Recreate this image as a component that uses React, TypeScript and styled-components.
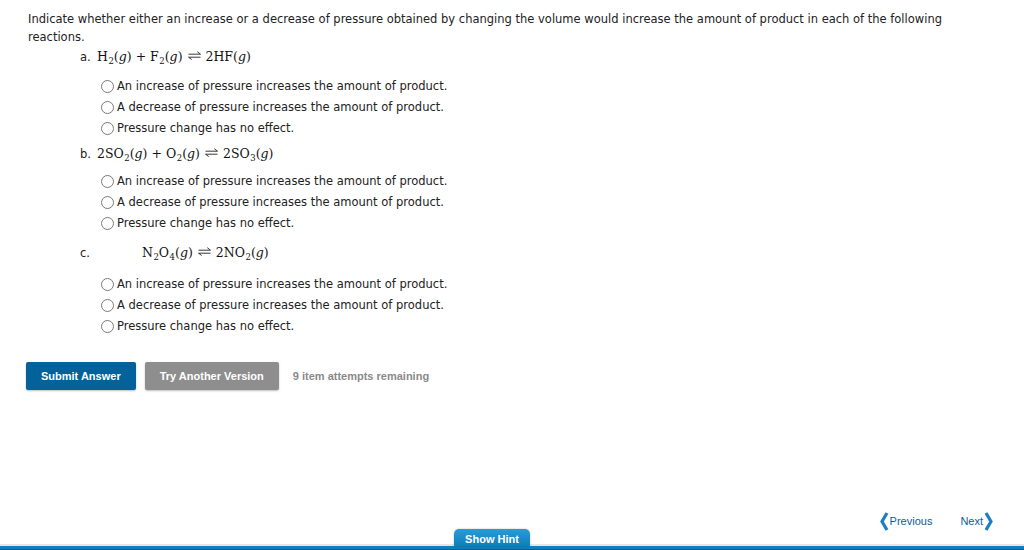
import React from "react";
import styled, { createGlobalStyle } from "styled-components";

const GlobalStyle = createGlobalStyle`
    html, body {
        margin: 0;
        padding: 0;
        background: #fff;
    }
    body {
        font-family: "DejaVu Sans", Verdana, sans-serif;
        color: #222;
    }
`;

const Page = styled.div`
    height: 550px;
    display: flex;
    flex-direction: column;
    overflow: hidden;
`;

const Content = styled.div`
    padding: 10px 70px 0 28px;
    flex: 1;
`;

const Prompt = styled.p`
    margin: 0;
    font-size: 11.5px;
    line-height: 18px;
`;

const Part = styled.div<{ $top: number }>`
    margin-top: ${(p) => p.$top}px;
    padding-left: 52px;
`;

const PartHead = styled.div`
    display: flex;
    align-items: baseline;
    font-size: 11.5px;
    height: 20px;
`;

const Letter = styled.span<{ $width: number }>`
    width: ${(p) => p.$width}px;
    flex-shrink: 0;
`;

const Equation = styled.span`
    font-family: "DejaVu Serif", "Liberation Serif", serif;
    font-size: 12.5px;
    color: #111;
    white-space: nowrap;
    sub {
        font-size: 8.5px;
        position: relative;
        top: 3px;
        vertical-align: baseline;
        line-height: 0;
        margin-left: 0.5px;
    }
    i {
        font-style: italic;
    }
`;

const Plus = styled.span`
    margin: 0 4px;
`;

const ArrowBox = styled.span`
    display: inline-block;
    margin: 0 5px;
    vertical-align: 1px;
    line-height: 0;
`;

const Options = styled.div<{ $top: number }>`
    margin-top: ${(p) => p.$top}px;
    padding-left: 21px;
    display: flex;
    flex-direction: column;
    gap: 7px;
`;

const Option = styled.label`
    display: flex;
    align-items: center;
    font-size: 11.5px;
    line-height: 14px;
    cursor: pointer;
`;

const Radio = styled.span`
    width: 11px;
    height: 11px;
    border: 1px solid #7a7a7a;
    border-radius: 50%;
    background: #fff;
    margin-right: 3px;
    flex-shrink: 0;
`;

const Actions = styled.div`
    display: flex;
    align-items: center;
    margin-top: 29px;
    margin-left: -2px;
    gap: 9px;
`;

const Button = styled.button<{ $variant: "primary" | "muted" }>`
    height: 28px;
    padding: 0 15px;
    border: none;
    border-radius: 2px;
    font-family: "Liberation Sans", Arial, sans-serif;
    font-weight: bold;
    font-size: 11px;
    color: #fff;
    background: ${(p) => (p.$variant === "primary" ? "#03629a" : "#8e8e8e")};
    box-shadow: 0 1px 2px rgba(0, 0, 0, 0.25);
    cursor: pointer;
`;

const Attempts = styled.span`
    margin-left: 5px;
    font-family: "Liberation Sans", Arial, sans-serif;
    font-weight: bold;
    font-size: 11px;
    color: #8a8a8a;
`;

const Footer = styled.div`
    display: flex;
    flex-direction: column;
`;

const NavRow = styled.div`
    display: flex;
    justify-content: flex-end;
    align-items: center;
    gap: 28px;
    padding-right: 30px;
    height: 18px;
`;

const NavLink = styled.a`
    display: flex;
    align-items: center;
    gap: 1px;
    font-family: "Liberation Sans", Arial, sans-serif;
    font-size: 11px;
    color: #0a5d9c;
    text-decoration: none;
    cursor: pointer;
`;

const HintRow = styled.div`
    display: flex;
    padding-left: 454px;
    margin-top: -1px;
    position: relative;
    z-index: 1;
`;

const HintTab = styled.button`
    width: 76px;
    height: 17px;
    border: none;
    border-radius: 5px 5px 0 0;
    background: linear-gradient(#2a9bd3, #0f7fbd);
    color: #fff;
    font-family: "Liberation Sans", Arial, sans-serif;
    font-weight: bold;
    font-size: 11px;
    padding: 2px 0 0;
    box-shadow: 0 0 2px rgba(0, 0, 0, 0.3);
    cursor: pointer;
`;

const BottomBar = styled.div`
    margin-top: -2px;
    height: 3px;
    border-top: 2px solid #e6e6e6;
    background: #0f7fbd;
    border-bottom: 1px solid #0b5b8a;
`;

function Chevron({ dir }: { dir: "left" | "right" }): JSX.Element {
    const points = dir === "left" ? "8,1 3,9.5 8,18" : "2,1 7,9.5 2,18";
    return (
        <svg width="10" height="19" viewBox="0 0 10 19">
            <polyline points={points} fill="none" stroke="#1e7cc0" strokeWidth="3.2" />
        </svg>
    );
}

// equilibrium harpoons, the font has no ⇌ glyph
function Equilibrium(): JSX.Element {
    return (
        <ArrowBox>
            <svg width="13" height="9" viewBox="0 0 13 9">
                <path d="M0.5 3.2 H12.5 L9.3 0.7" fill="none" stroke="#222" strokeWidth="0.9" />
                <path d="M12.5 6.2 H0.5 L3.7 8.5" fill="none" stroke="#222" strokeWidth="0.9" />
            </svg>
        </ArrowBox>
    );
}

const choices = [
    "An increase of pressure increases the amount of product.",
    "A decrease of pressure increases the amount of product.",
    "Pressure change has no effect.",
];

function ChoiceList({ top }: { top: number }): JSX.Element {
    return (
        <Options $top={top}>
            {choices.map((text) => (
                <Option key={text}>
                    <Radio />
                    {text}
                </Option>
            ))}
        </Options>
    );
}

function App(): JSX.Element {
    return (
        <Page>
            <GlobalStyle />
            <Content>
                <Prompt>
                    Indicate whether either an increase or a decrease of pressure obtained by changing the volume would increase the amount of product in each of the following reactions.
                </Prompt>

                <Part $top={3}>
                    <PartHead>
                        <Letter $width={17}>a.</Letter>
                        <Equation>
                            H<sub>2</sub>(<i>g</i>)<Plus>+</Plus>F<sub>2</sub>(<i>g</i>)<Equilibrium />2HF(<i>g</i>)
                        </Equation>
                    </PartHead>
                    <ChoiceList top={10} />
                </Part>

                <Part $top={11}>
                    <PartHead>
                        <Letter $width={17}>b.</Letter>
                        <Equation>
                            2SO<sub>2</sub>(<i>g</i>)<Plus>+</Plus>O<sub>2</sub>(<i>g</i>)<Equilibrium />2SO<sub>3</sub>(<i>g</i>)
                        </Equation>
                    </PartHead>
                    <ChoiceList top={8} />
                </Part>

                <Part $top={15}>
                    <PartHead>
                        <Letter $width={62}>c.</Letter>
                        <Equation>
                            N<sub>2</sub>O<sub>4</sub>(<i>g</i>)<Equilibrium />2NO<sub>2</sub>(<i>g</i>)
                        </Equation>
                    </PartHead>
                    <ChoiceList top={12} />
                </Part>

                <Actions>
                    <Button $variant="primary">Submit Answer</Button>
                    <Button $variant="muted">Try Another Version</Button>
                    <Attempts>9 item attempts remaining</Attempts>
                </Actions>
            </Content>

            <Footer>
                <NavRow>
                    <NavLink>
                        <Chevron dir="left" />
                        Previous
                    </NavLink>
                    <NavLink>
                        Next
                        <Chevron dir="right" />
                    </NavLink>
                </NavRow>
                <HintRow>
                    <HintTab>Show Hint</HintTab>
                </HintRow>
                <BottomBar />
            </Footer>
        </Page>
    );
}

export default App;
